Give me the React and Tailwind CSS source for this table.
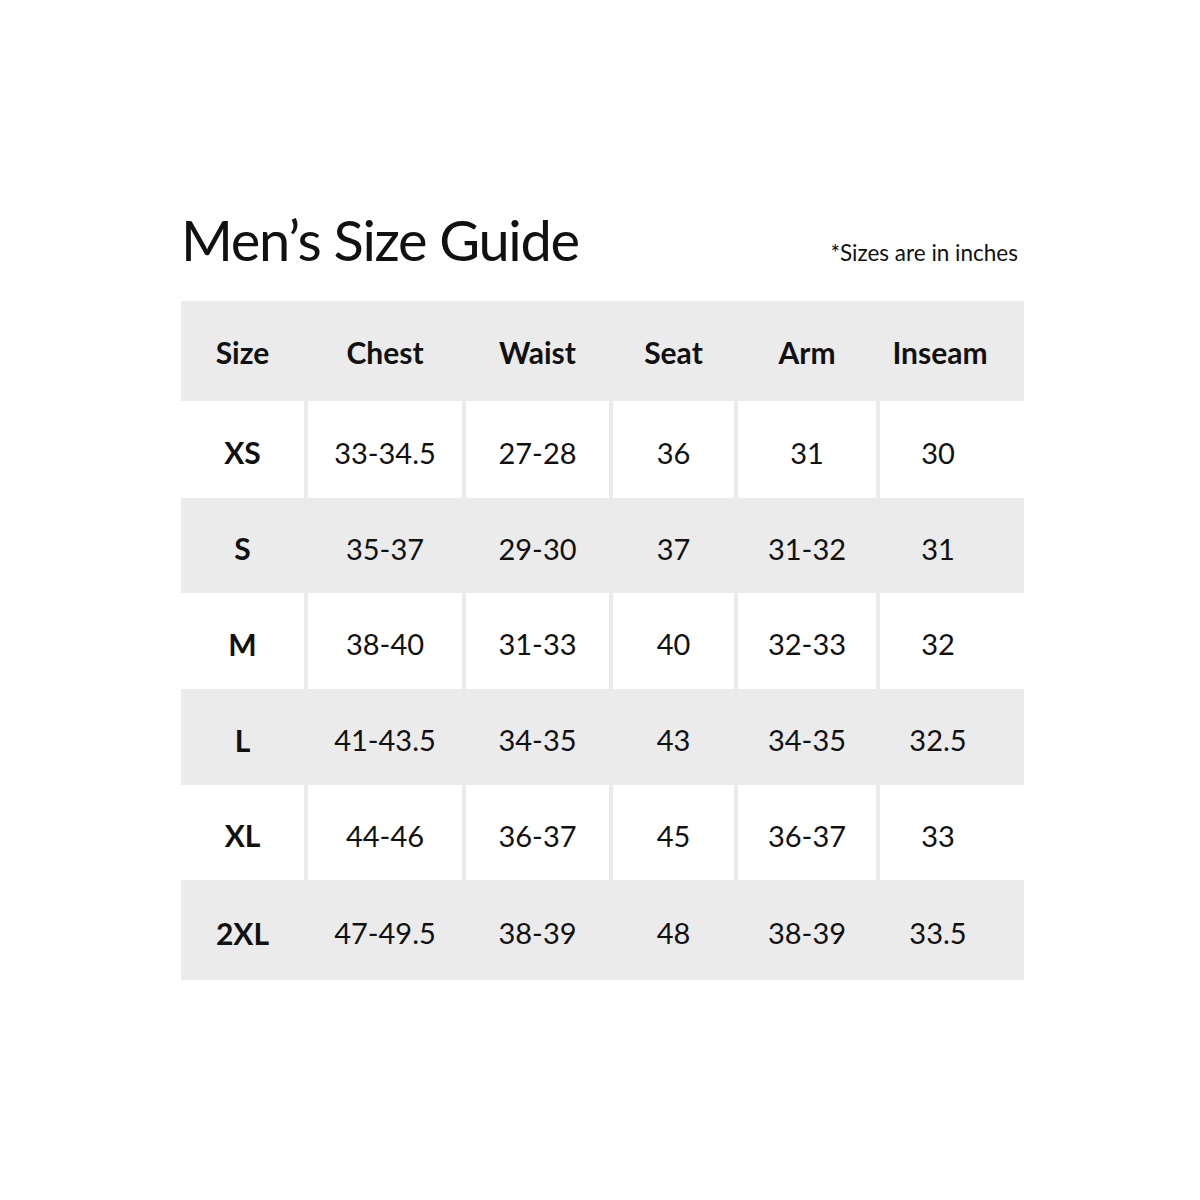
const headers = ['Size', 'Chest', 'Waist', 'Seat', 'Arm', 'Inseam'];

const rows = [
    { h: 'h-[97px]', cells: ['XS', '33-34.5', '27-28', '36', '31', '30'] },
    { h: 'h-[95px]', cells: ['S', '35-37', '29-30', '37', '31-32', '31'] },
    { h: 'h-[96px]', cells: ['M', '38-40', '31-33', '40', '32-33', '32'] },
    { h: 'h-[96px]', cells: ['L', '41-43.5', '34-35', '43', '34-35', '32.5'] },
    { h: 'h-[95px]', cells: ['XL', '44-46', '36-37', '45', '36-37', '33'] },
    { h: 'h-[100px]', cells: ['2XL', '47-49.5', '38-39', '48', '38-39', '33.5'] },
];

const cols = 'grid grid-cols-[123px_154px_143px_121px_138px_144px] gap-x-[4px]';

const App = () => {
    return (
        <div className="w-[1200px] h-[1200px] bg-white text-[#111] pt-[205px] pl-[181px]" style={{ fontFamily: 'Lato, "Open Sans", sans-serif' }}>
            <div className="w-[843px]">
                {/* title row */}
                <div className="flex justify-between items-baseline h-[70px]">
                    <h1 className="text-[56px] leading-[70px] font-normal tracking-[-1.3px]">Men’s Size Guide</h1>
                    <span className="text-[22.5px] pr-[6px]">*Sizes are in inches</span>
                </div>

                <div className="mt-[26px] bg-[#ebebeb]">
                    {/* header */}
                    <div className={`${cols} h-[100px] items-center`}>
                        {headers.map((t, i) => (
                            <div key={t} className={`text-center text-[30px] pt-[2px] font-bold ${i === 5 ? 'pr-[24px]' : ''}`}>{t}</div>
                        ))}
                    </div>

                    {rows.map((r, ri) => (
                        <div key={r.cells[0]} className={`${cols} ${r.h}`}>
                            {r.cells.map((c, i) => (
                                <div
                                    key={i}
                                    className={`flex items-center justify-center pt-[6px] text-[29px] ${ri % 2 === 0 ? 'bg-white' : ''} ${i === 0 ? 'font-bold text-[30px]' : ''} ${i === 5 ? 'pr-[28px]' : ''}`}
                                >
                                    {c}
                                </div>
                            ))}
                        </div>
                    ))}
                </div>
            </div>
        </div>
    );
};

export default App;
